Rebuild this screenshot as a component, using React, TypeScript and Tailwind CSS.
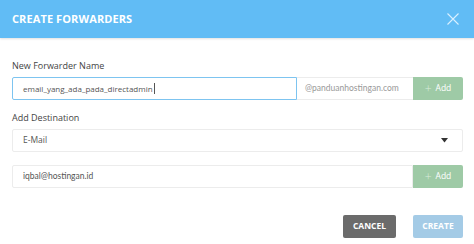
export default function App() {
  return (
    <div className="w-[474px] h-[244px] bg-white font-['Open_Sans',sans-serif] overflow-hidden">
      <div className="h-[38px] bg-[#61bcf5] flex items-center justify-between pl-[12px] pr-[15px] shadow-[0_1px_2px_rgba(0,0,0,0.12)]">
        <h2 className="text-[11px] font-bold text-white tracking-[0.1px]">CREATE FORWARDERS</h2>
        <svg width="12" height="12" viewBox="0 0 12 12" className="text-[#d9f0ff]">
          <path d="M0.5 0.5 L11.5 11.5 M11.5 0.5 L0.5 11.5" stroke="currentColor" strokeWidth="1.1" />
        </svg>
      </div>

      <div className="pl-[12px] pr-[11px]">
        <div className="mt-[22px] h-[12px] text-[9px] leading-[12px] text-[#444]">New Forwarder Name</div>
        <div className="mt-[5px] flex h-[23px]">
          <div className="w-[285px] border border-[#7dc4f0] rounded-l-[2px] flex items-center pl-[10px] text-[8px] text-[#555]">
            email_yang_ada_pada_directadmin<span className="w-px h-[11px] bg-[#555] ml-px" />
          </div>
          <div className="w-[116px] border-y border-[#ececec] flex items-center pl-[8px] text-[8.5px] text-[#999] font-['Lato',sans-serif]">
            @panduanhostingan.com
          </div>
          <button className="w-[50px] bg-[#9ecaa6] rounded-r-[2px] flex items-center justify-center gap-[4px] text-[8.5px] text-white">
            <span className="text-[12px] font-light leading-none text-[#d8eadb]">+</span>Add
          </button>
        </div>

        <div className="mt-[12px] h-[12px] text-[9px] leading-[12px] text-[#444]">Add Destination</div>
        <div className="mt-[5px] h-[23px] border border-[#ececec] rounded-[2px] flex items-center justify-between pl-[10px] pr-[14px] text-[8.5px] text-[#555]">
          <span>E-Mail</span>
          <svg width="7" height="5" viewBox="0 0 7 5">
            <path d="M0 0 H7 L3.5 4.5 Z" fill="#333" />
          </svg>
        </div>

        <div className="mt-[13px] flex h-[23px]">
          <div className="flex-1 border border-[#ececec] rounded-l-[2px] flex items-center pl-[10px] text-[8.5px] text-[#555] font-['Lato',sans-serif]">
            iqbal@hostingan.id
          </div>
          <button className="w-[50px] bg-[#9ecaa6] rounded-r-[2px] flex items-center justify-center gap-[4px] text-[8.5px] text-white">
            <span className="text-[12px] font-light leading-none text-[#d8eadb]">+</span>Add
          </button>
        </div>

        <div className="mt-[27px] flex justify-end gap-[17px]">
          <button className="w-[53px] h-[23px] bg-[#6b6b6b] rounded-[2px] text-[8.5px] font-bold text-white">CANCEL</button>
          <button className="w-[50px] h-[23px] bg-[#a4cbe6] rounded-[2px] text-[8.5px] font-bold text-white">CREATE</button>
        </div>
      </div>
    </div>
  );
}
